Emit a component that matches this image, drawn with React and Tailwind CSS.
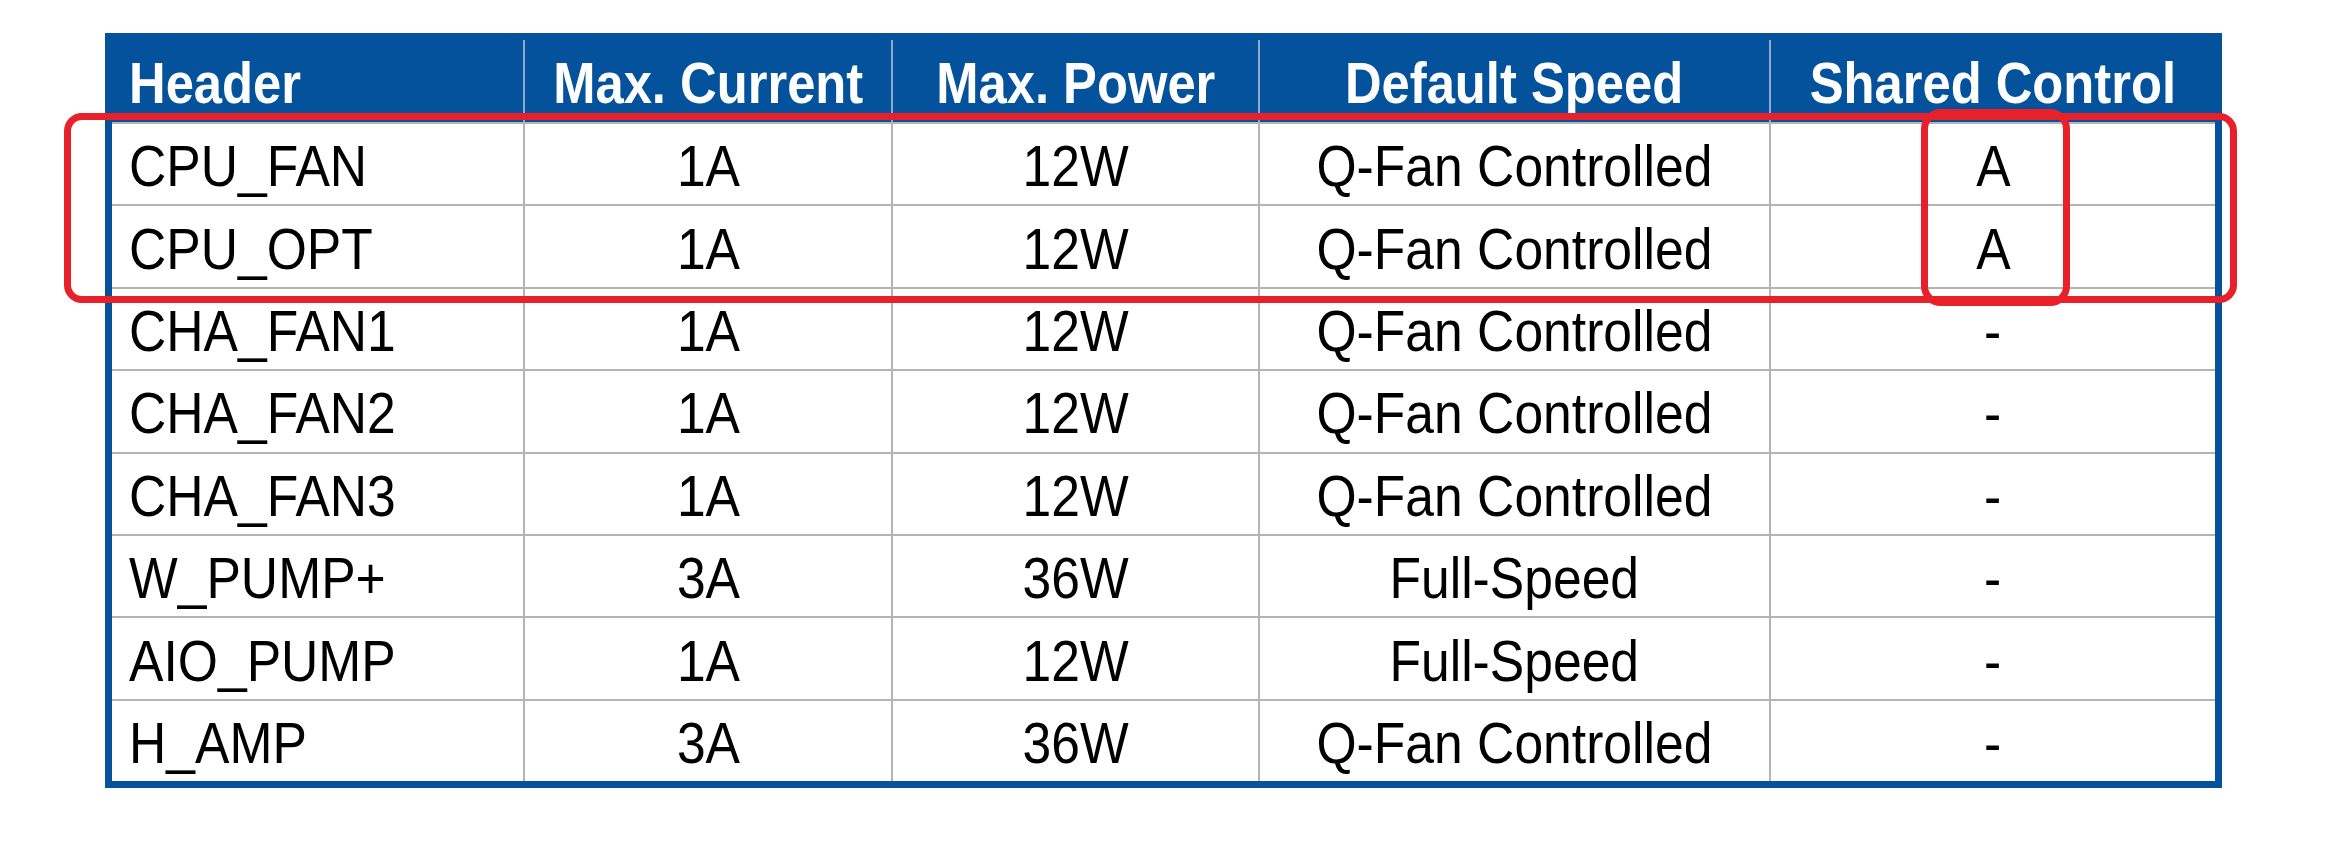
const COLUMNS = ["Header", "Max. Current", "Max. Power", "Default Speed", "Shared Control"];

const ROWS = [
  ["CPU_FAN", "1A", "12W", "Q-Fan Controlled", "A"],
  ["CPU_OPT", "1A", "12W", "Q-Fan Controlled", "A"],
  ["CHA_FAN1", "1A", "12W", "Q-Fan Controlled", "-"],
  ["CHA_FAN2", "1A", "12W", "Q-Fan Controlled", "-"],
  ["CHA_FAN3", "1A", "12W", "Q-Fan Controlled", "-"],
  ["W_PUMP+", "3A", "36W", "Full-Speed", "-"],
  ["AIO_PUMP", "1A", "12W", "Full-Speed", "-"],
  ["H_AMP", "3A", "36W", "Q-Fan Controlled", "-"],
];

// column widths measured inside the 7px blue frame
const GRID = "grid grid-cols-[411px_368px_367px_511px_446px]";

function Cell({ i, children, header }) {
  const first = i === 0;
  return (
    <div
      className={`flex items-center pt-[4px] ${first ? "justify-start pl-[17px]" : "justify-center"} ${
        i > 0 ? (header ? "border-l-2 border-[#8fa7c9]" : "border-l-2 border-[#b4b4b4]") : ""
      }`}
    >
      <span
        className={`inline-block whitespace-nowrap scale-x-[0.89] ${first ? "origin-left" : "origin-center"} ${
          header ? "text-[57px] font-bold text-white" : "text-[58px] text-black"
        } leading-none`}
      >
        {children}
      </span>
    </div>
  );
}

export default function App() {
  return (
    <div
      className="relative h-[865px] w-[2333px] bg-white pl-[105px] pt-[33px]"
      style={{ fontFamily: '"Liberation Sans", Arial, sans-serif' }}
    >
      <div className="w-[2117px] border-[7px] border-t-0 border-[#04529c] bg-white">
        <div className={`${GRID} h-[89px] bg-[#04529c] pt-[7px]`}>
          {COLUMNS.map((c, i) => (
            <Cell key={c} i={i} header>
              {c}
            </Cell>
          ))}
        </div>
        {ROWS.map((row) => (
          <div key={row[0]} className={`${GRID} h-[82.4px] border-t-2 border-[#b4b4b4]`}>
            {row.map((v, i) => (
              <Cell key={i} i={i}>
                {v}
              </Cell>
            ))}
          </div>
        ))}
      </div>

      {/* red highlight annotations */}
      <div className="pointer-events-none absolute left-[64px] top-[113px] h-[190px] w-[2173px] rounded-[18px] border-[7px] border-[#e8202a]" />
      <div className="pointer-events-none absolute left-[1921px] top-[109px] h-[197px] w-[149px] rounded-[20px] border-[7px] border-[#e8202a]" />
    </div>
  );
}
